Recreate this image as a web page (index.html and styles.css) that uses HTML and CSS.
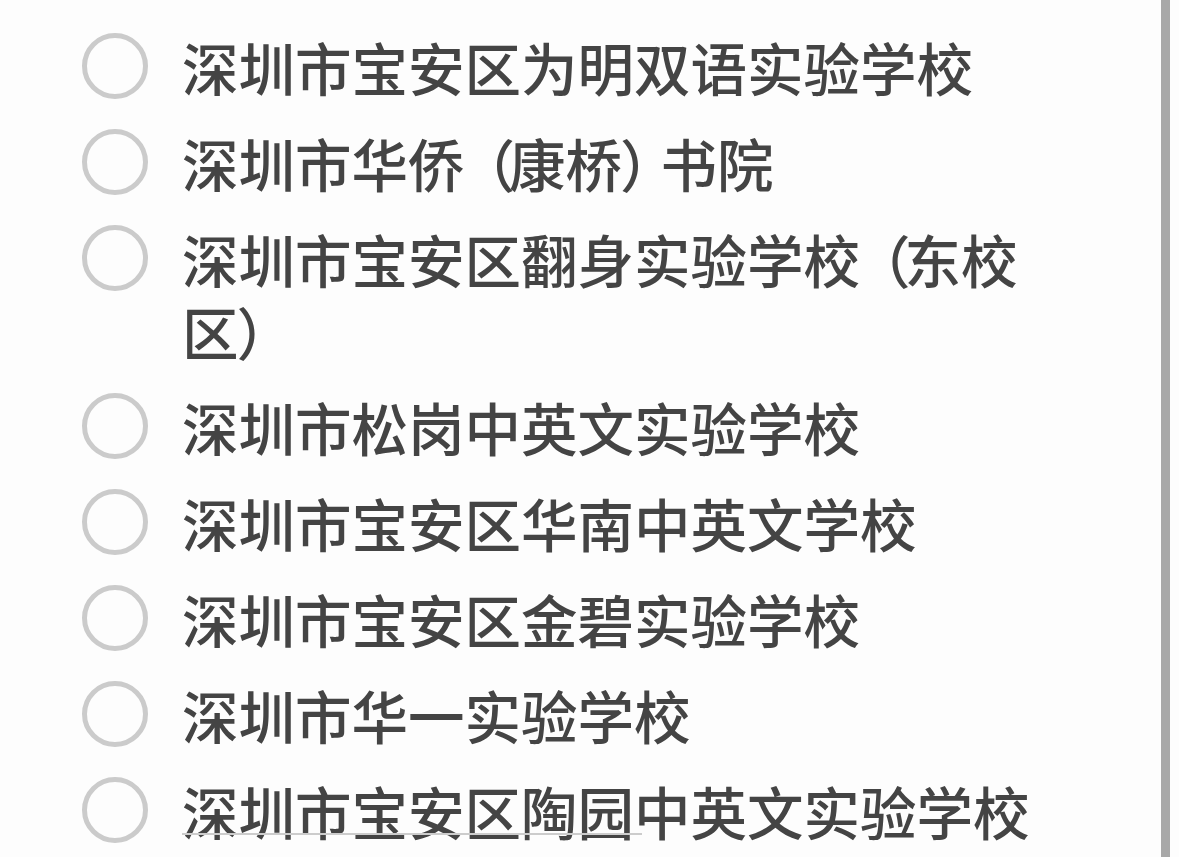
FILE: index.html
```html
<!DOCTYPE html>
<html lang="zh-CN">
<head>
<meta charset="utf-8">
<link rel="stylesheet" href="styles.css">
</head>
<body>
<div class="page">
  <main class="list">
    <div class="row"><span class="radio"></span><span class="label">深圳市宝安区为明双语实验学校</span></div>
    <div class="row"><span class="radio"></span><span class="label">深圳市华侨<span class="po">（</span>康桥<span class="pc">）</span>书院</span></div>
    <div class="row"><span class="radio"></span><span class="label">深圳市宝安区翻身实验学校<span class="po">（</span>东校区<span class="pc">）</span></span></div>
    <div class="row"><span class="radio"></span><span class="label">深圳市松岗中英文实验学校</span></div>
    <div class="row"><span class="radio"></span><span class="label">深圳市宝安区华南中英文学校</span></div>
    <div class="row"><span class="radio"></span><span class="label">深圳市宝安区金碧实验学校</span></div>
    <div class="row"><span class="radio"></span><span class="label">深圳市华一实验学校</span></div>
    <div class="row"><span class="radio"></span><span class="label"><span class="ul">深圳市宝安区陶园</span>中英文实验学校</span></div>
  </main>
  <div class="scrollbar"></div>
</div>
</body>
</html>
```
FILE: styles.css
```css
html, body {
  margin: 0;
  padding: 0;
  background: #fdfdfd;
}
.page {
  display: flex;
  height: 857px;
  overflow: hidden;
}
.list {
  width: 1161px;
  padding: 30px 0 0 82px;
  box-sizing: border-box;
  display: flex;
  flex-direction: column;
  gap: 24px;
}
.row {
  display: flex;
  align-items: flex-start;
  gap: 34px;
}
.radio {
  flex: none;
  width: 66px;
  height: 66px;
  margin-top: 3px;
  border: 5px solid #cbcbcb;
  border-radius: 50%;
  box-sizing: border-box;
}
.label {
  width: 900px;
  font-family: "Noto Sans CJK SC", "Noto Sans", sans-serif;
  font-weight: 500;
  font-size: 56.5px;
  line-height: 72px;
  color: #444444;
}
.po {
  margin-left: -6px;
  margin-right: -6px;
}
.pc {
  margin-left: -2px;
  margin-right: -16px;
}
.ul {
  position: relative;
}
.ul::after {
  content: "";
  position: absolute;
  left: 0;
  right: -8px;
  bottom: 16px;
  height: 2px;
  background: #cccccc;
}
.scrollbar {
  flex: none;
  width: 9px;
  background: #a8a8a8;
}
```
